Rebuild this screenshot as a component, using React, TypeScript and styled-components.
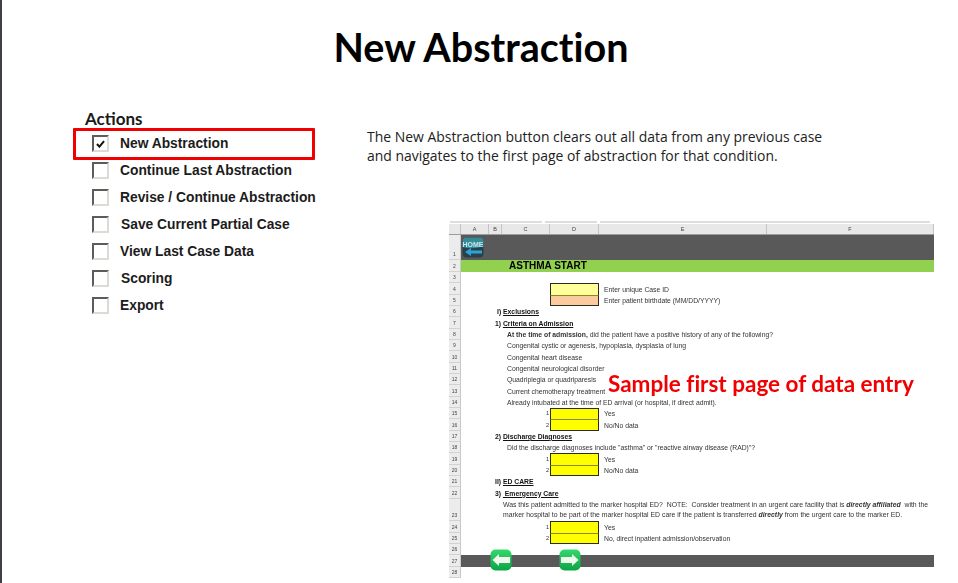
import React from "react"
import styled, { createGlobalStyle } from "styled-components"

const GlobalStyle = createGlobalStyle`
    html, body {
        margin: 0;
        padding: 0;
        background: #ffffff;
    }
`

const Page = styled.div`
    width: 958px;
    height: 583px;
    box-sizing: border-box;
    border-left: 2px solid #3d4045;
    overflow: hidden;
    background: #ffffff;
`

const Title = styled.h1`
    margin: 0;
    padding: 24px 0 0 2px;
    height: 84px;
    box-sizing: border-box;
    text-align: center;
    font-family: "Lato", sans-serif;
    font-size: 39.5px;
    line-height: 46px;
    font-weight: 700;
    font-variant-ligatures: none;
    color: #000000;
`

const Content = styled.div`
    display: flex;
`

const Actions = styled.div`
    position: relative;
    width: 365px;
    flex: none;
    padding: 24px 0 0 83px;
    box-sizing: border-box;
`

const ActionsHeading = styled.div`
    font-family: "Lato", sans-serif;
    font-size: 17px;
    line-height: 22px;
    font-weight: 700;
    color: #1a1a1a;
`

const ActionRow = styled.div<{ $height: number; $nudge: number }>`
    display: flex;
    align-items: center;
    height: ${(p) => p.$height}px;
    padding-left: 7px;
    font-family: "Liberation Sans", sans-serif;
    font-size: 13.8px;
    font-weight: 700;
    color: #1c1c1c;
    span {
        margin-left: ${(p) => 11 + p.$nudge}px;
    }
`

const Check = styled.div`
    width: 17px;
    height: 17px;
    box-sizing: border-box;
    border: 2px solid;
    border-color: #5c5c5c #dcdcd6 #dcdcd6 #5c5c5c;
    display: flex;
    align-items: center;
    justify-content: center;
    background: #ffffff;
`

const Highlight = styled.div`
    position: absolute;
    left: 71px;
    top: 44px;
    width: 242px;
    height: 32px;
    box-sizing: border-box;
    border: 3px solid #f00000;
    border-radius: 1px;
`

const RightColumn = styled.div`
    flex: 1;
    min-width: 0;
`

const Description = styled.p`
    margin: 43px 0 0;
    height: 93px;
    font-family: "Open Sans", sans-serif;
    font-size: 13.95px;
    line-height: 19px;
    color: #222222;
`

const Sheet = styled.div`
    position: relative;
    margin-left: 82px;
    width: 485px;
    filter: blur(0.4px);
`

const Ribbon = styled.div`
    display: flex;
    gap: 3px;
    height: 3px;
    padding-left: 1px;
    margin-bottom: 1px;
`

const RibbonPart = styled.div<{ $width: number }>`
    width: ${(p) => p.$width}px;
    border-bottom: 2px solid #dddddd;
`

const ColumnHeads = styled.div`
    display: grid;
    grid-template-columns: 12px 28px 13px 48px 49px 168px 167px;
    height: 10px;
    background: #e8e8e8;
    border-bottom: 1px solid #9c9c9c;
    box-sizing: content-box;
`

const ColumnHead = styled.div`
    font-family: "Liberation Sans", sans-serif;
    font-size: 5.5px;
    line-height: 10px;
    text-align: center;
    color: #444444;
    border-right: 1px solid #c4c4c4;
`

const Row = styled.div<{ $height: number }>`
    display: flex;
    height: ${(p) => p.$height}px;
`

const RowHead = styled.div`
    width: 12px;
    flex: none;
    box-sizing: border-box;
    background: #ececec;
    border-bottom: 1px solid #d2d2d2;
    border-right: 1px solid #c8c8c8;
    display: flex;
    align-items: flex-end;
    justify-content: center;
    font-family: "Liberation Sans", sans-serif;
    font-size: 5px;
    line-height: 9px;
    color: #444444;
`

const Cells = styled.div<{ $bg?: string }>`
    flex: 1;
    display: grid;
    grid-template-columns: 28px 13px 48px 49px 168px 167px;
    align-items: end;
    background: ${(p) => p.$bg || "transparent"};
    font-family: "Liberation Sans", sans-serif;
    font-size: 6.8px;
    line-height: 11px;
    color: #333333;
`

const Text = styled.div<{ $col: number; $left?: number; $bold?: boolean }>`
    grid-column: ${(p) => p.$col};
    padding-left: ${(p) => p.$left || 0}px;
    white-space: nowrap;
    font-weight: ${(p) => (p.$bold ? 700 : 400)};
    color: ${(p) => (p.$bold ? "#111111" : "#333333")};
    u {
        text-underline-offset: 1px;
    }
`

const Wrapped = styled.div`
    padding-bottom: 2px;
    white-space: nowrap;
    line-height: 9.5px;
    font-size: 6.87px;
`

const Banner = styled.div`
    grid-column: 3 / 7;
    padding: 0 0 1px 7px;
    font-size: 10px;
    line-height: 11px;
    font-weight: 700;
    color: #000000;
    align-self: center;
`

const Num = styled.div`
    grid-column: 3;
    text-align: right;
    padding-right: 1px;
    font-size: 5.6px;
`

const Entry = styled.div<{ $fill: string; $top?: boolean }>`
    grid-column: 4;
    align-self: stretch;
    box-sizing: border-box;
    background: ${(p) => p.$fill};
    border: 1px solid #2c2c1c;
    border-top-color: ${(p) => (p.$top ? "#2c2c1c" : "#8a8a20")};
    border-bottom: ${(p) => (p.$top ? "none" : "1px solid #2c2c1c")};
`

const EntryNote = styled.div`
    grid-column: 5;
    padding-left: 5px;
    white-space: nowrap;
`

const SampleNote = styled.div`
    position: absolute;
    left: 159px;
    top: 150px;
    font-family: "Lato", sans-serif;
    font-size: 22.5px;
    line-height: 28px;
    font-weight: 700;
    font-variant-ligatures: none;
    color: #f00000;
    white-space: nowrap;
`

const HomeIcon = styled.svg`
    position: absolute;
    left: 13px;
    top: 17px;
`

const ArrowIcon = styled.svg<{ $left: number }>`
    position: absolute;
    left: ${(p) => p.$left}px;
    top: 329px;
`

const actionItems = [
    { label: "New Abstraction", checked: true, height: 27, nudge: 0 },
    { label: "Continue Last Abstraction", checked: false, height: 27, nudge: 0 },
    { label: "Revise / Continue Abstraction", checked: false, height: 27, nudge: 0 },
    { label: "Save Current Partial Case", checked: false, height: 27, nudge: 1 },
    { label: "View Last Case Data", checked: false, height: 27, nudge: 0 },
    { label: "Scoring", checked: false, height: 27, nudge: 1 },
    { label: "Export", checked: false, height: 26, nudge: 0 },
]

const columns = ["A", "B", "C", "D", "E", "F"]

function YesNo({ no, top }: { no: string; top: boolean }) {
    return <>
        <Num>{top ? 1 : 2}</Num>
        <Entry $fill="#ffff00" $top={top} />
        <EntryNote>{no}</EntryNote>
    </>
}

const H = 11.33

const rows: { n: number; h?: number; bg?: string; body?: React.ReactNode }[] = [
    { n: 1, h: 25, bg: "#595959" },
    { n: 2, h: 12, bg: "#92d050", body: <Banner>ASTHMA START</Banner> },
    { n: 3 },
    { n: 4, body: <><Entry $fill="#ffff99" $top /><EntryNote>Enter unique Case ID</EntryNote></> },
    { n: 5, body: <><Entry $fill="#fbcb9f" /><EntryNote>Enter patient birthdate (MM/DD/YYYY)</EntryNote></> },
    { n: 6, body: <Text $col={2} $left={8} $bold>I) <u>Exclusions</u></Text> },
    { n: 7, body: <Text $col={2} $left={6} $bold>1) <u>Criteria on Admission</u></Text> },
    { n: 8, body: <Text $col={3} $left={5}><b>At the time of admission,</b> did the patient have a positive history of any of the following?</Text> },
    { n: 9, body: <Text $col={3} $left={5}>Congenital cystic or agenesis, hypoplasia, dysplasia of lung</Text> },
    { n: 10, body: <Text $col={3} $left={5}>Congenital heart disease</Text> },
    { n: 11, body: <Text $col={3} $left={5}>Congenital neurological disorder</Text> },
    { n: 12, body: <Text $col={3} $left={5}>Quadriplegia or quadriparesis</Text> },
    { n: 13, body: <Text $col={3} $left={5}>Current chemotherapy treatment</Text> },
    { n: 14, body: <Text $col={3} $left={5}>Already intubated at the time of ED arrival (or hospital, if direct admit).</Text> },
    { n: 15, body: <YesNo no="Yes" top /> },
    { n: 16, body: <YesNo no="No/No data" top={false} /> },
    { n: 17, body: <Text $col={2} $left={6} $bold>2) <u>Discharge Diagnoses</u></Text> },
    { n: 18, body: <Text $col={3} $left={5}>Did the discharge diagnoses include "asthma" or "reactive airway disease (RAD)"?</Text> },
    { n: 19, body: <YesNo no="Yes" top /> },
    { n: 20, body: <YesNo no="No/No data" top={false} /> },
    { n: 21, body: <Text $col={2} $left={6} $bold>II) <u>ED CARE</u></Text> },
    { n: 22, body: <Text $col={2} $left={6} $bold>3) <u>&nbsp;Emergency Care</u></Text> },
    {
        n: 23, h: H * 2, body: <Text $col={3} $left={1}><Wrapped>
            Was this patient admitted to the marker hospital ED?&nbsp; NOTE:&nbsp; Consider treatment in an urgent care facility that is <b><i>directly affiliated</i></b>&nbsp; with the<br />
            marker hospital to be part of the marker hospital ED care if the patient is transferred <b><i>directly</i></b> from the urgent care to the marker ED.
        </Wrapped></Text>
    },
    { n: 24, body: <YesNo no="Yes" top /> },
    { n: 25, body: <YesNo no="No, direct inpatient admission/observation" top={false} /> },
    { n: 26 },
    { n: 27, bg: "#595959" },
    { n: 28 },
]

function Arrow({ left, flip }: { left: number; flip?: boolean }) {
    const id = flip ? "greenR" : "greenL"
    return <ArrowIcon $left={left} width="22" height="22" viewBox="0 0 22 22">
        <defs>
            <linearGradient id={id} x1="0" y1="0" x2="0" y2="1">
                <stop offset="0" stopColor="#35d86c" />
                <stop offset="1" stopColor="#0aa544" />
            </linearGradient>
        </defs>
        <rect x="0.5" y="0.5" width="21" height="21" rx="5" fill={`url(#${id})`} />
        <path
            d="M2.5 11 L9 5 V8 H20 V14 H9 V17 Z"
            fill="#f2f7ee"
            transform={flip ? "rotate(180 11 11)" : undefined}
        />
    </ArrowIcon>
}

export default function App() {
    return <Page>
        <GlobalStyle />
        <Title>New Abstraction</Title>
        <Content>
            <Actions>
                <ActionsHeading>Actions</ActionsHeading>
                {actionItems.map((item) => (
                    <ActionRow key={item.label} $height={item.height} $nudge={item.nudge}>
                        <Check>
                            {item.checked && <svg width="9" height="8" viewBox="0 0 10 9">
                                <path d="M1 4.5 L3.8 7.5 L9 1.2" fill="none" stroke="#111111" strokeWidth="2.2" />
                            </svg>}
                        </Check>
                        <span>{item.label}</span>
                    </ActionRow>
                ))}
                <Highlight />
            </Actions>
            <RightColumn>
                <Description>
                    The New Abstraction button clears out all data from any previous case<br />
                    and navigates to the first page of abstraction for that condition.
                </Description>
                <Sheet>
                    <Ribbon>
                        <RibbonPart $width={92} />
                        <RibbonPart $width={52} />
                        <RibbonPart $width={330} />
                    </Ribbon>
                    <ColumnHeads>
                        <ColumnHead />
                        {columns.map((c) => <ColumnHead key={c}>{c}</ColumnHead>)}
                    </ColumnHeads>
                    {rows.map((r) => (
                        <Row key={r.n} $height={r.h || H}>
                            <RowHead>{r.n}</RowHead>
                            <Cells $bg={r.bg}>{r.body}</Cells>
                        </Row>
                    ))}
                    <HomeIcon width="22" height="21" viewBox="0 0 22 21">
                        <rect x="0.5" y="0.5" width="21" height="20" rx="4" fill="#2b3f48" />
                        <path d="M0.5 10 V4.5 a4 4 0 0 1 4 -4 H17.5 a4 4 0 0 1 4 4 V9 Q11 13 0.5 10 Z" fill="#3a8a96" />
                        <text x="11" y="9.5" textAnchor="middle" fontFamily="Liberation Sans" fontSize="7" fontWeight="700" fill="#bfeaf4">HOME</text>
                        <path d="M3 15 L9 11 V13.5 H20 V16.5 H9 V19 Z" fill="#2aa3dc" />
                    </HomeIcon>
                    <Arrow left={41} />
                    <Arrow left={110} flip />
                    <SampleNote>Sample first page of data entry</SampleNote>
                </Sheet>
            </RightColumn>
        </Content>
    </Page>
}
